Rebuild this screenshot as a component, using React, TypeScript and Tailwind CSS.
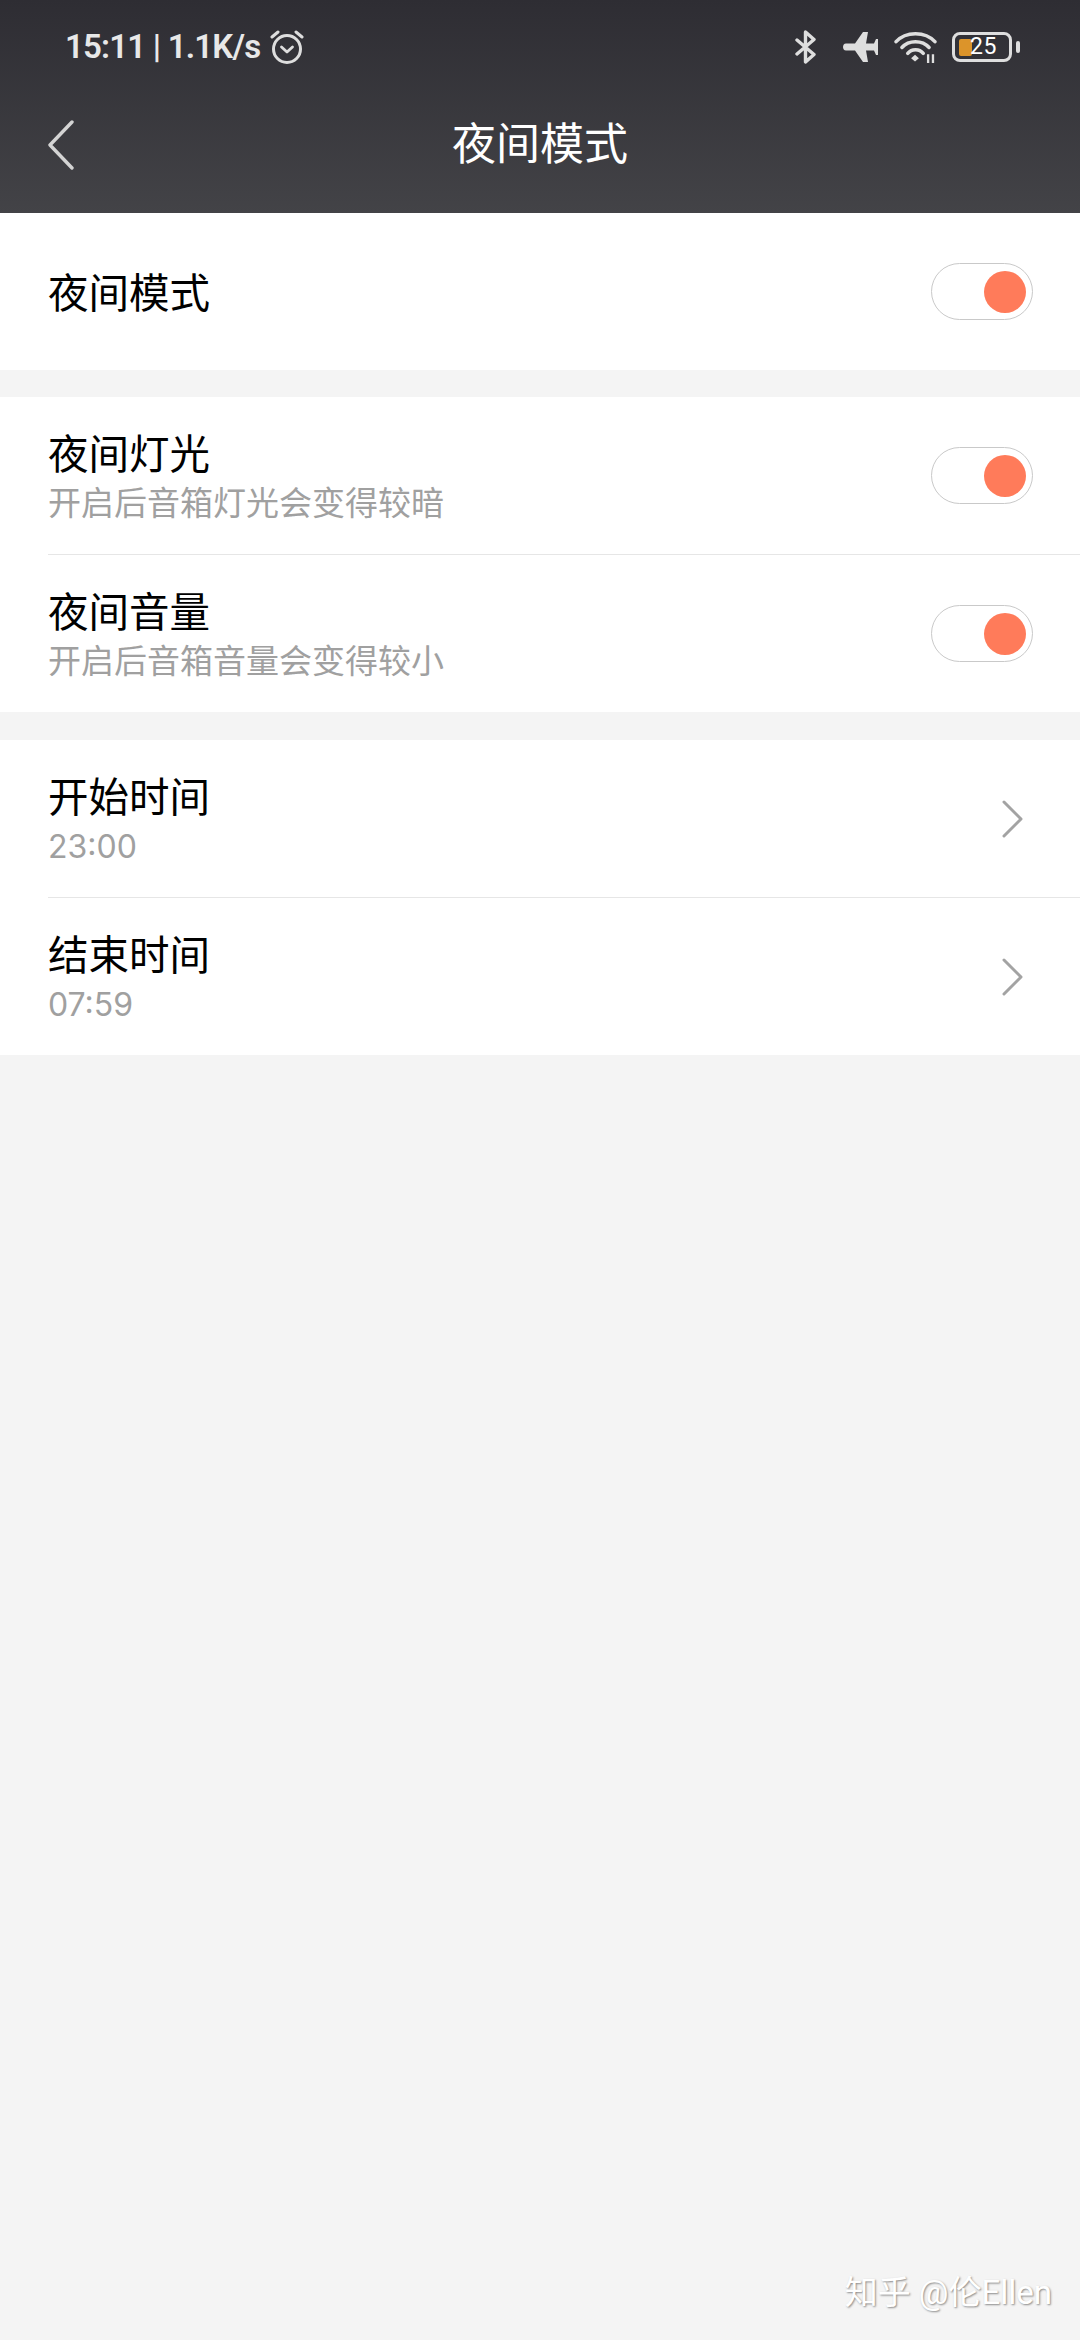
import React from "react";

const cjk = "font-['Roboto','Noto_Sans_CJK_SC',sans-serif]";

const Toggle = () => (
  <div className="flex h-[57px] w-[102px] items-center justify-end rounded-full border border-[#c9c9c9] bg-white pr-[6px]">
    <div className="h-[42px] w-[42px] rounded-full bg-[#ff7b5a]" />
  </div>
);

const Chevron = () => (
  <svg width="24" height="40" viewBox="0 0 24 40" fill="none" className="mr-[55px]">
    <path d="M3 3 L20 20 L3 37" stroke="#a3a3a3" strokeWidth="3" strokeLinecap="round" strokeLinejoin="round" />
  </svg>
);

const Row = ({ title, sub, isTime, children }: { title: string; sub: string; isTime?: boolean; children: React.ReactNode }) => (
  <div className="flex h-[157px] items-center justify-between pl-[48px]">
    <div className="flex flex-col pt-[7px]">
      <span className="text-[40.5px] leading-[50px] text-black">{title}</span>
      <span className={`${isTime ? "font-['Inter',sans-serif] text-[32px]" : "text-[33px]"} leading-[48px] text-[#a0a0a0]`}>{sub}</span>
    </div>
    {children}
  </div>
);

const Divider = () => <div className="ml-[48px] h-px bg-[#e6e6e6]" />;

const StatusIcons = () => (
  <div className="flex items-center">
    <svg width="22" height="34" viewBox="0 0 22 34" fill="none" stroke="#dedede" strokeWidth="3.4" strokeLinejoin="round" strokeLinecap="round">
      <path d="M2 10 L19 24.5 L10.5 32 V2 L19 9.5 L2 24" />
    </svg>
    <svg width="35" height="30" viewBox="0 0 35 30" fill="#dedede" className="ml-[26px]">
      <path d="M3 11.5 H12 L20 0 H25 L23 11.5 H31 L33 7 H35 V23 H33 L31 18.5 H23 L25 30 H20 L12 18.5 H3 C-1 18.5 -1 11.5 3 11.5 Z" />
    </svg>
    <svg width="43" height="33" viewBox="0 0 44 34" fill="none" className="ml-[16px]">
      <path d="M2 11 C12 0 32 0 42 11" stroke="#dedede" strokeWidth="3.6" strokeLinecap="round" />
      <path d="M8 17 C15 9 29 9 36 17" stroke="#dedede" strokeWidth="3.6" strokeLinecap="round" />
      <path d="M14 23 C18 18 26 18 30 23" stroke="#dedede" strokeWidth="3.6" strokeLinecap="round" />
      <path d="M17.5 28 L21.5 24.5 L25.5 28 L21.5 31.5 Z" fill="#dedede" />
      <path d="M35 24 V33 M40 24 V33" stroke="#dedede" strokeWidth="2.4" />
    </svg>
    <div className="relative ml-[15px] flex items-center">
      <div className="flex h-[30px] w-[60px] items-center rounded-[8px] border-[3px] border-[#dedede] pl-[4px]">
        <div className="h-[17px] w-[13px] rounded-[2px] bg-[#dc942a]" />
      </div>
      <span className="absolute left-[18px] top-[1px] text-[23px] leading-[28px] tracking-[0.5px] text-white font-['Roboto',sans-serif]">25</span>
      <div className="ml-[4px] h-[12px] w-[4px] rounded-[2px] bg-[#dedede]" />
    </div>
  </div>
);

export default function App() {
  return (
    <div className={`flex min-h-[2340px] w-[1080px] flex-col bg-[#f4f4f4] ${cjk}`}>
      <div className="h-[213px] bg-gradient-to-b from-[#2e2d33] to-[#434347]">
        <div className="flex h-[94px] items-center justify-between pl-[65px] pr-[60px]">
          <div className="flex items-center gap-[10px] text-[#e8e8e8]">
            <span className="whitespace-pre text-[33px] font-semibold tracking-[-0.8px] font-['Roboto',sans-serif]">15:11 | 1.1K/s</span>
            <svg width="34" height="36" viewBox="0 0 34 36" fill="none" stroke="#dedede" strokeLinecap="round" strokeLinejoin="round">
              <circle cx="17" cy="20" r="13.5" strokeWidth="3" />
              <path d="M11.5 18 L17 23 L22.5 18" strokeWidth="2.8" />
              <path d="M2 8 L8 3 M32 8 L26 3" strokeWidth="3" />
            </svg>
          </div>
          <StatusIcons />
        </div>
        <div className="mt-[26px] grid h-[50px] grid-cols-[1fr_auto_1fr] items-center pl-[48px]">
          <svg width="26" height="50" viewBox="0 0 26 50" fill="none">
            <path d="M24 2 L2 25 L24 48" stroke="#d4d4d4" strokeWidth="3.4" strokeLinecap="round" strokeLinejoin="round" />
          </svg>
          <span className="-ml-[48px] text-[44px] leading-[50px] text-white">夜间模式</span>
          <span />
        </div>
      </div>

      <div className="flex h-[157px] items-center justify-between bg-white pl-[48px] pr-[47px]">
        <span className="pt-[6px] text-[40.5px] text-black">夜间模式</span>
        <Toggle />
      </div>

      <div className="mt-[27px] bg-white">
        <Row title="夜间灯光" sub="开启后音箱灯光会变得较暗">
          <div className="mr-[47px]"><Toggle /></div>
        </Row>
        <Divider />
        <Row title="夜间音量" sub="开启后音箱音量会变得较小">
          <div className="mr-[47px]"><Toggle /></div>
        </Row>
      </div>

      <div className="mt-[28px] bg-white">
        <Row title="开始时间" sub="23:00" isTime>
          <Chevron />
        </Row>
        <Divider />
        <Row title="结束时间" sub="07:59" isTime>
          <Chevron />
        </Row>
      </div>

      <div className="mt-auto flex justify-end pb-[27px] pr-[28px]">
        <span className="text-[33px] leading-[40px] text-white [text-shadow:1px_1px_2px_#8a8a8a]">知乎 @伦Ellen</span>
      </div>
    </div>
  );
}
